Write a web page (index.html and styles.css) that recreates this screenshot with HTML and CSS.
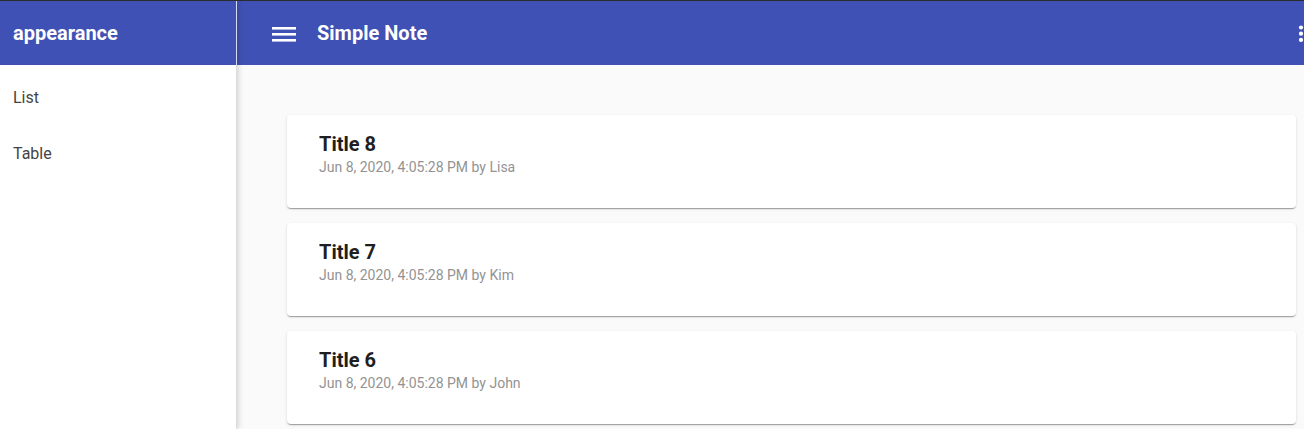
FILE: index.html
```html
<!DOCTYPE html>
<html lang="en">
<head>
<meta charset="utf-8">
<title>Simple Note</title>
<link rel="stylesheet" href="styles.css">
</head>
<body>
<div class="frame">
  <aside class="drawer">
    <div class="drawer-header">appearance</div>
    <nav class="drawer-list">
      <div class="drawer-item">List</div>
      <div class="drawer-item">Table</div>
    </nav>
  </aside>
  <main class="main">
    <header class="appbar">
      <svg class="menu-icon" width="24" height="16" viewBox="0 0 24 16" aria-hidden="true">
        <rect x="0" y="1" width="24" height="2.6" fill="#fff"/>
        <rect x="0" y="7" width="24" height="2.6" fill="#fff"/>
        <rect x="0" y="13" width="24" height="2.6" fill="#fff"/>
      </svg>
      <span class="appbar-title">Simple Note</span>
      <span class="spacer"></span>
      <svg class="more-icon" width="7" height="18" viewBox="0 0 7 18" aria-hidden="true">
        <circle cx="4" cy="2.5" r="2.1" fill="#fff"/>
        <circle cx="4" cy="8.7" r="2.1" fill="#fff"/>
        <circle cx="4" cy="14.9" r="2.1" fill="#fff"/>
      </svg>
    </header>
    <section class="content">
      <article class="card">
        <h2 class="card-title">Title 8</h2>
        <p class="card-sub">Jun 8, 2020, 4:05:28 PM by Lisa</p>
      </article>
      <article class="card">
        <h2 class="card-title">Title 7</h2>
        <p class="card-sub">Jun 8, 2020, 4:05:28 PM by Kim</p>
      </article>
      <article class="card">
        <h2 class="card-title">Title 6</h2>
        <p class="card-sub">Jun 8, 2020, 4:05:28 PM by John</p>
      </article>
    </section>
  </main>
</div>
</body>
</html>
```
FILE: styles.css
```css
* { box-sizing: border-box; }
html, body {
  margin: 0;
  height: 100%;
  overflow: hidden;
}
body {
  font-family: Roboto, "Liberation Sans", sans-serif;
  background: #fafafa;
  border-top: 1px solid #2b2b2b;
}
.frame {
  display: flex;
  height: 100%;
}
.drawer {
  position: relative;
  z-index: 2;
  width: 237px;
  flex: none;
  background: #fff;
  display: flex;
  flex-direction: column;
  box-shadow: 1px 0 6px rgba(0, 0, 0, 0.18);
}
.drawer-header {
  height: 64px;
  background: #3f51b5;
  color: #fff;
  font-size: 20px;
  font-weight: 700;
  padding-left: 13px;
  display: flex;
  align-items: center;
  border-right: 1px solid #d6dbf3;
}
.drawer-list {
  flex: 1;
  padding-top: 4px;
  border-right: 1px solid #dcdcdc;
}
.drawer-item {
  height: 56px;
  display: flex;
  align-items: center;
  padding-left: 13px;
  font-size: 16px;
  color: #444;
}
.main {
  flex: 1;
  display: flex;
  flex-direction: column;
  min-width: 0;
}
.appbar {
  height: 64px;
  flex: none;
  background: #3f51b5;
  color: #fff;
  display: flex;
  align-items: center;
  padding-left: 35px;
}
.menu-icon { display: block; margin-top: 1px; }
.appbar-title {
  margin-left: 21px;
  font-size: 20px;
  font-weight: 700;
}
.spacer { flex: 1; }
.more-icon { display: block; margin-top: 1px; }
.content {
  display: flex;
  flex-direction: column;
  gap: 15px;
  padding: 50px 8px 0 50px;
}
.card {
  background: #fff;
  border-radius: 4px;
  height: 93px;
  padding: 17px 32px 0;
  box-shadow: 0 2px 1px -1px rgba(0, 0, 0, 0.2), 0 1px 1px 0 rgba(0, 0, 0, 0.14), 0 1px 3px 0 rgba(0, 0, 0, 0.12);
}
.card-title {
  margin: 0;
  font-size: 20px;
  font-weight: 700;
  line-height: 24px;
  color: #1f1f1f;
}
.card-sub {
  margin: 1px 0 0;
  font-size: 14px;
  line-height: 20px;
  color: #939393;
}
```
